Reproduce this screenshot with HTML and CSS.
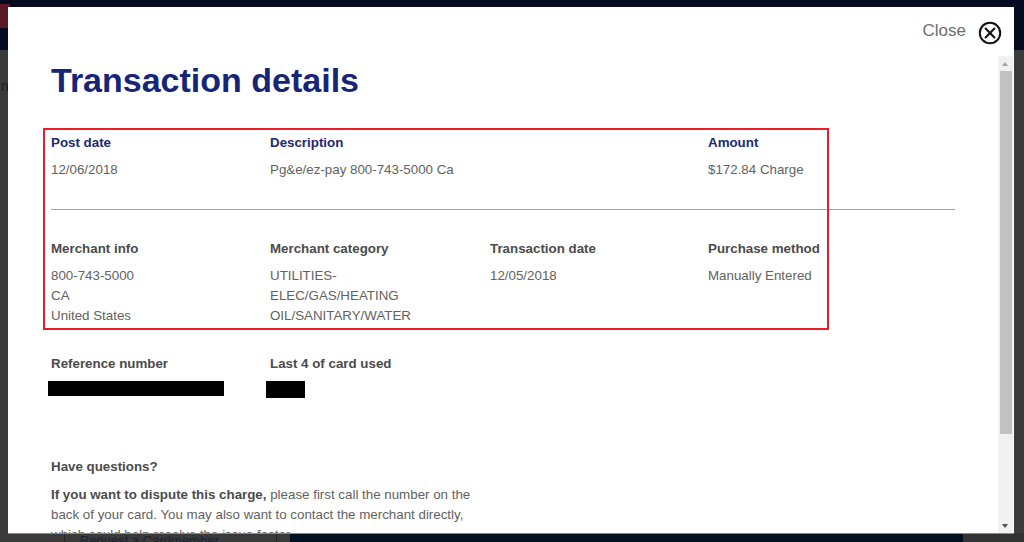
FILE: index.html
```html
<!DOCTYPE html>
<html lang="en">
<head>
<meta charset="utf-8">
<title>Transaction details</title>
<link rel="stylesheet" href="styles.css">
</head>
<body>
<div class="page">
  <header class="page-header">
    <span class="logo-bit"></span>
  </header>
  <div class="page-main">
    <span class="nav-letter">n</span>
  </div>
  <footer class="page-footer">
    <div class="footer-left"><span class="footer-link">Request a Cardmember</span></div>
    <div class="footer-mid"></div>
    <div class="footer-right"></div>
  </footer>
</div>

<div class="modal">
  <div class="modal-head">
    <span class="close-text">Close</span>
    <svg class="close-icon" width="24" height="24" viewBox="0 0 24 24" aria-hidden="true">
      <circle cx="12" cy="12" r="10.2" fill="none" stroke="#111" stroke-width="2"/>
      <path d="M7.6 7.6 L16.4 16.4 M16.4 7.6 L7.6 16.4" stroke="#111" stroke-width="2.1" stroke-linecap="round"/>
    </svg>
  </div>
  <div class="modal-body">
    <div class="scroll-content">
      <h1 class="title">Transaction details</h1>

      <div class="details">
        <div class="highlight"></div>
        <div class="row">
          <div class="cell">
            <div class="label label-primary">Post date</div>
            <div class="value">12/06/2018</div>
          </div>
          <div class="cell">
            <div class="label label-primary">Description</div>
            <div class="value">Pg&amp;e/ez-pay 800-743-5000 Ca</div>
          </div>
          <div class="cell"></div>
          <div class="cell">
            <div class="label label-primary">Amount</div>
            <div class="value">$172.84 Charge</div>
          </div>
        </div>
        <hr class="divider">
        <div class="row row-second">
          <div class="cell">
            <div class="label">Merchant info</div>
            <div class="value">800-743-5000<br>CA<br>United States</div>
          </div>
          <div class="cell">
            <div class="label">Merchant category</div>
            <div class="value">UTILITIES-<br>ELEC/GAS/HEATING<br>OIL/SANITARY/WATER</div>
          </div>
          <div class="cell">
            <div class="label">Transaction date</div>
            <div class="value">12/05/2018</div>
          </div>
          <div class="cell">
            <div class="label">Purchase method</div>
            <div class="value">Manually Entered</div>
          </div>
        </div>
      </div>

      <div class="row row-third">
        <div class="cell">
          <div class="label">Reference number</div>
          <div class="value value-redacted"><span class="redact redact-ref"></span></div>
        </div>
        <div class="cell">
          <div class="label">Last 4 of card used</div>
          <div class="value value-redacted"><span class="redact redact-card"></span></div>
        </div>
      </div>

      <section class="questions">
        <div class="label q-label">Have questions?</div>
        <p class="q-text"><strong>If you want to dispute this charge,</strong> please first call the number on the back of your card. You may also want to contact the merchant directly, which could help resolve the issue faster.</p>
      </section>
    </div>
    <div class="scrollbar">
      <div class="sb-arrow sb-up"></div>
      <div class="sb-track"><div class="sb-thumb"></div></div>
      <div class="sb-arrow sb-down"></div>
    </div>
  </div>
</div>
</body>
</html>
```

FILE: styles.css
```css
* { box-sizing: border-box; }

html, body {
  margin: 0;
  padding: 0;
  width: 1024px;
  height: 542px;
  overflow: hidden;
  font-family: "Liberation Sans", Arial, sans-serif;
  background: #3a3a3a;
}

/* Background page (dimmed) */
.page {
  width: 1024px;
  height: 542px;
  display: flex;
  flex-direction: column;
}
.page-header {
  height: 50px;
  background: #040b21;
  position: relative;
}
.logo-bit {
  position: absolute;
  left: 0;
  top: 4px;
  width: 10px;
  height: 24px;
  background: #5a1826;
}
.page-main {
  flex: 1;
  background: #3b3b3b;
  color: #1c1c1c;
  font-size: 14px;
  padding-top: 28px;
}
.nav-letter {
  display: block;
  padding-left: 1px;
}
.page-footer {
  height: 9px;
  display: flex;
  overflow: hidden;
}
.footer-left {
  width: 290px;
  background: #3a3a3a;
  border-left: 1px solid transparent;
  position: relative;
}
.footer-left::before,
.footer-left::after {
  content: "";
  position: absolute;
  top: 0;
  bottom: 0;
  width: 1px;
  background: #262626;
}
.footer-left::before { left: 63px; }
.footer-left::after { left: 275px; }
.footer-link {
  display: block;
  padding-left: 79px;
  margin-top: 0;
  font-size: 13px;
  line-height: 16px;
  color: #1d2030;
}
.footer-mid {
  width: 673px;
  background: #01101f;
}
.footer-right {
  flex: 1;
  background: #333;
}

/* Modal */
.modal {
  position: absolute;
  left: 8px;
  top: 7px;
  width: 1006px;
  height: 526px;
  background: #fff;
  display: flex;
  flex-direction: column;
  box-shadow: 0 1px 0 #8a8a8a;
}
.modal-head {
  height: 49px;
  display: flex;
  justify-content: flex-end;
  align-items: center;
  padding-right: 12px;
  gap: 12px;
}
.close-text {
  font-size: 17px;
  color: #6e6e6e;
  margin-top: -1px;
}
.close-icon {
  display: block;
  margin-top: 2px;
}
.modal-body {
  flex: 1;
  display: flex;
  min-height: 0;
  padding-right: 1px;
}
.scroll-content {
  flex: 1;
  overflow: hidden;
  padding: 0 43px;
}

.title {
  margin: 4px 0 0;
  font-size: 34px;
  line-height: 40px;
  font-weight: bold;
  color: #172577;
}

.details {
  position: relative;
  margin-top: 33px;
}
.highlight {
  position: absolute;
  left: -8px;
  top: -5px;
  width: 786px;
  height: 202px;
  border: 2px solid #ec1c24;
  pointer-events: none;
}

.row {
  display: grid;
  grid-template-columns: 219px 220px 218px 1fr;
}
.cell { min-width: 0; }

.label {
  font-size: 13.33px;
  line-height: 20px;
  font-weight: bold;
  color: #4b4b4b;
  margin-bottom: 7px;
}
.label-primary { color: #1b2a72; }

.value {
  font-size: 13.33px;
  line-height: 20px;
  color: #626262;
}

.divider {
  margin: 29px 0 0;
  border: 0;
  height: 1px;
  background: #a3a3a3;
}
.row-second { margin-top: 29px; }
.row-third { margin-top: 28px; }

.value-redacted { height: 20px; }
.redact {
  display: block;
  background: #000;
}
.redact-ref {
  width: 176px;
  height: 15px;
  margin: 1px 0 0 -3px;
}
.redact-card {
  width: 39px;
  height: 17px;
  margin: 1px 0 0 -4px;
}

.questions { margin-top: 56px; }
.q-label { margin-bottom: 8px; }
.q-text {
  margin: 0;
  width: 424px;
  font-size: 13.33px;
  line-height: 20px;
  color: #626262;
}
.q-text strong { color: #4b4b4b; }

/* Faux scrollbar */
.scrollbar {
  width: 15px;
  background: #f1f1f1;
  display: flex;
  flex-direction: column;
}
.sb-arrow {
  height: 15px;
  position: relative;
}
.sb-arrow::after {
  content: "";
  position: absolute;
  left: 4px;
  width: 0;
  height: 0;
  border-left: 3.5px solid transparent;
  border-right: 3.5px solid transparent;
}
.sb-up::after {
  top: 6px;
  border-bottom: 4px solid #a3a3a3;
}
.sb-down::after {
  top: 6px;
  border-top: 4px solid #505050;
}
.sb-track {
  flex: 1;
  padding: 0 1px 0 2px;
}
.sb-thumb {
  height: 363px;
  background: #c1c1c1;
}
```
